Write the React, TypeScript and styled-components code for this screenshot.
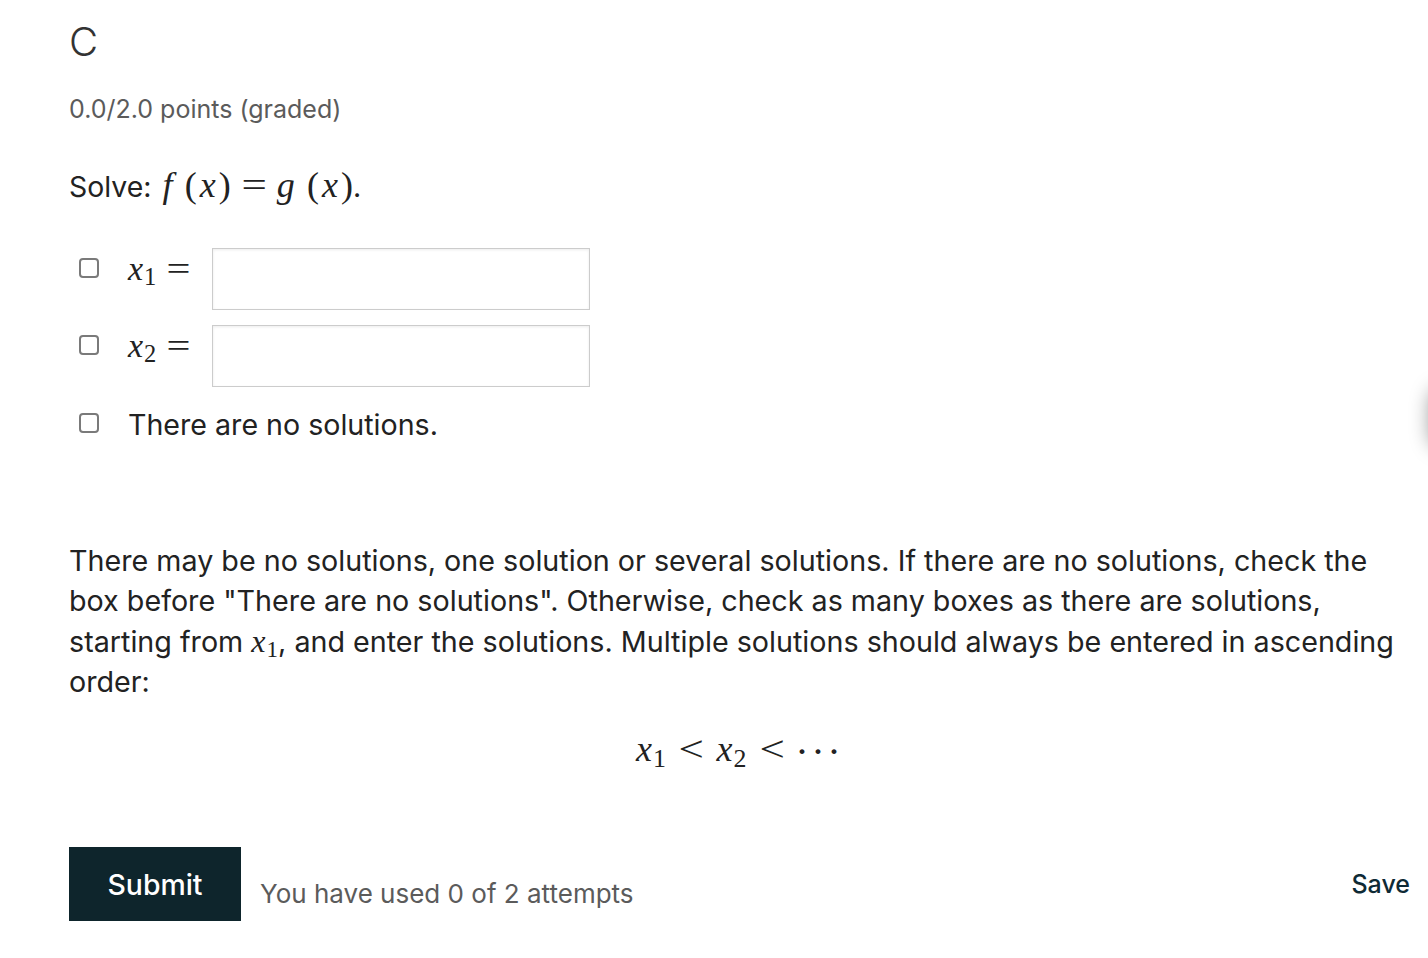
import React from "react";
import styled, { createGlobalStyle } from "styled-components";

const GlobalStyle = createGlobalStyle`
  html, body {
    margin: 0;
    padding: 0;
    background: #ffffff;
  }
  body {
    font-family: Inter, "Noto Sans", sans-serif;
    color: #222222;
  }
`;

const App: React.FC = () => {
  return (
    <Page>
      <GlobalStyle />
      <Title>C</Title>
      <Points>0.0/2.0 points (graded)</Points>
      <Prompt>
        Solve:{" "}
        <MathRun>
          <Var>f</Var>
          <Paren $open>(</Paren>
          <Var>x</Var>
          <Paren>)</Paren>
          <Rel>=</Rel>
          <Var>g</Var>
          <Paren $open>(</Paren>
          <Var>x</Var>
          <Paren>)</Paren>
        </MathRun>
        .
      </Prompt>

      <Options>
        <OptionRow>
          <CheckBox type="checkbox" $top />
          <MathLabel>
            <Var>x</Var>
            <Sub>1</Sub>
            <Rel>=</Rel>
          </MathLabel>
          <AnswerInput type="text" />
        </OptionRow>
        <OptionRow>
          <CheckBox type="checkbox" $top />
          <MathLabel>
            <Var>x</Var>
            <Sub>2</Sub>
            <Rel>=</Rel>
          </MathLabel>
          <AnswerInput type="text" />
        </OptionRow>
        <OptionRow $short>
          <CheckBox type="checkbox" />
          <OptionText>There are no solutions.</OptionText>
        </OptionRow>
      </Options>

      <Instructions>
        There may be no solutions, one solution or several solutions. If there
        are no solutions, check the box before "There are no solutions".
        Otherwise, check as many boxes as there are solutions, starting from{" "}
        <InlineMath>
          <Var>x</Var>
          <Sub>1</Sub>
        </InlineMath>
        , and enter the solutions. Multiple solutions should always be entered
        in ascending order:
      </Instructions>

      <DisplayMath>
        <Var>x</Var>
        <Sub>1</Sub>
        <Rel $wide>&lt;</Rel>
        <Var>x</Var>
        <Sub>2</Sub>
        <Rel $wide>&lt;</Rel>
        <Dots>···</Dots>
      </DisplayMath>

      <ActionBar>
        <SubmitButton>Submit</SubmitButton>
        <Attempts>You have used 0 of 2 attempts</Attempts>
        <SaveButton>Save</SaveButton>
      </ActionBar>

      <EdgeTab />
    </Page>
  );
};

const Page = styled.div`
  position: relative;
  min-height: 958px;
  box-sizing: border-box;
  padding: 18px 16px 0 69px;
  overflow: hidden;
`;

const Title = styled.h2`
  margin: 0;
  font-size: 40px;
  line-height: 48px;
  font-weight: 300;
  color: #333333;
`;

const Points = styled.div`
  margin-top: 26px;
  font-size: 25px;
  line-height: 34px;
  color: #5b5b5b;
`;

const Prompt = styled.p`
  margin: 39px 0 0;
  font-size: 28.4px;
  line-height: 40px;
  color: #222222;
`;

const MathRun = styled.span`
  font-family: "Liberation Serif", "DejaVu Serif", serif;
  font-size: 36px;
  margin-left: 3px;
`;

const Var = styled.span`
  font-family: "Liberation Serif", "DejaVu Serif", serif;
  font-style: italic;
`;

const Paren = styled.span<{ $open?: boolean }>`
  font-family: "Liberation Serif", "DejaVu Serif", serif;
  margin: ${(p) => (p.$open ? "0 3px 0 0.34em" : "0 0 0 3px")};
`;

const Rel = styled.span<{ $wide?: boolean }>`
  font-family: "Liberation Serif", "DejaVu Serif", serif;
  margin: ${(p) => (p.$wide ? "0 0.42em" : "0 0.36em")};
  display: inline-block;
  transform: scaleX(1.25);
`;

const Sub = styled.sub`
  font-family: "Liberation Serif", "DejaVu Serif", serif;
  font-size: 0.72em;
  vertical-align: -0.22em;
  line-height: 0;
  margin-left: 1px;
`;

const Options = styled.div`
  margin-top: 41px;
  display: flex;
  flex-direction: column;
  gap: 15px;
`;

const OptionRow = styled.div<{ $short?: boolean }>`
  display: flex;
  align-items: ${(p) => (p.$short ? "center" : "flex-start")};
  height: ${(p) => (p.$short ? "42px" : "62px")};
  padding-left: 10px;
`;

const CheckBox = styled.input<{ $top?: boolean }>`
  appearance: none;
  width: 20px;
  height: 20px;
  margin: ${(p) => (p.$top ? "10px 29px 0 0" : "0 29px 0 0")};
  box-sizing: border-box;
  border: 2px solid #7a7a7a;
  border-radius: 4px;
  background: #ffffff;
  flex-shrink: 0;
`;

const MathLabel = styled.span`
  font-family: "Liberation Serif", "DejaVu Serif", serif;
  font-size: 34px;
  line-height: 42px;
  color: #222222;
  width: 84px;
  white-space: nowrap;
`;

const AnswerInput = styled.input`
  width: 378px;
  height: 62px;
  box-sizing: border-box;
  border: 1px solid #cccccc;
  box-shadow: inset 0 1px 3px rgba(0, 0, 0, 0.08);
  background: #ffffff;
  font-size: 24px;
  padding: 0 12px;
`;

const OptionText = styled.span`
  font-size: 28.6px;
  line-height: 40px;
  color: #222222;
  margin-top: 3px;
`;

const Instructions = styled.p`
  margin: 97px 0 0;
  font-size: 28.7px;
  line-height: 40px;
  color: #222222;
`;

const InlineMath = styled.span`
  font-family: "Liberation Serif", "DejaVu Serif", serif;
  font-size: 32px;
`;

const DisplayMath = styled.div`
  margin-top: 27px;
  height: 40px;
  line-height: 40px;
  text-align: center;
  font-family: "Liberation Serif", "DejaVu Serif", serif;
  font-size: 36px;
  color: #222222;
`;

const Dots = styled.span`
  font-family: "Liberation Serif", serif;
  font-size: 30px;
  letter-spacing: 6px;
  font-weight: bold;
`;

const ActionBar = styled.div`
  margin-top: 78px;
  display: flex;
  align-items: center;
`;

const SubmitButton = styled.button`
  width: 172px;
  height: 74px;
  border: 0;
  background: #0e252c;
  color: #ffffff;
  font-family: Inter, "Noto Sans", sans-serif;
  font-size: 28.4px;
  font-weight: 500;
  padding: 0;
`;

const Attempts = styled.span`
  margin: 18px 0 0 19px;
  font-size: 26px;
  color: #5b5b5b;
`;

const SaveButton = styled.button`
  margin-left: auto;
  margin-right: 2px;
  border: 0;
  background: transparent;
  padding: 0;
  font-family: Inter, "Noto Sans", sans-serif;
  font-size: 25px;
  font-weight: 500;
  color: #0e2a35;
`;

const EdgeTab = styled.div`
  position: absolute;
  top: 388px;
  right: -66px;
  width: 64px;
  height: 60px;
  border-radius: 14px;
  background: #ffffff;
  box-shadow: 0 0 20px rgba(0, 0, 0, 0.4);
`;

export default App;
